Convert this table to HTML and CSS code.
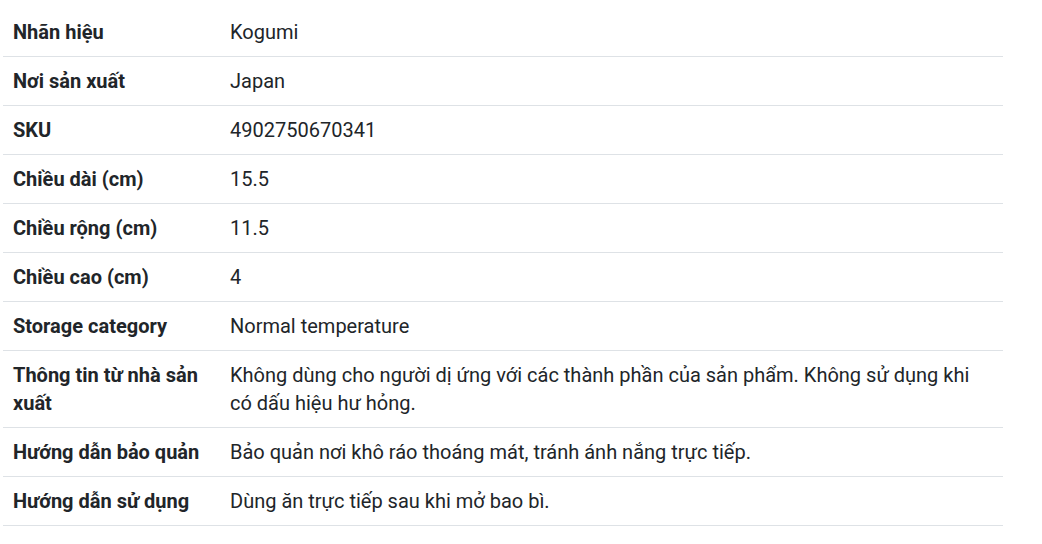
FILE: index.html
```html
<!DOCTYPE html>
<html lang="vi">
<head>
<meta charset="utf-8">
<link rel="stylesheet" href="styles.css">
</head>
<body>
<table class="spec">
  <colgroup><col class="c-label"><col></colgroup>
  <tbody>
    <tr><th>Nhãn hiệu</th><td>Kogumi</td></tr>
    <tr><th>Nơi sản xuất</th><td>Japan</td></tr>
    <tr><th>SKU</th><td>4902750670341</td></tr>
    <tr><th>Chiều dài (cm)</th><td>15.5</td></tr>
    <tr><th>Chiều rộng (cm)</th><td>11.5</td></tr>
    <tr><th>Chiều cao (cm)</th><td>4</td></tr>
    <tr><th>Storage category</th><td>Normal temperature</td></tr>
    <tr><th>Thông tin từ nhà sản xuất</th><td>Không dùng cho người dị ứng với các thành phần của sản phẩm. Không sử dụng khi có dấu hiệu hư hỏng.</td></tr>
    <tr><th>Hướng dẫn bảo quản</th><td>Bảo quản nơi khô ráo thoáng mát, tránh ánh nắng trực tiếp.</td></tr>
    <tr><th>Hướng dẫn sử dụng</th><td>Dùng ăn trực tiếp sau khi mở bao bì.</td></tr>
  </tbody>
</table>
</body>
</html>
```
FILE: styles.css
```css
html, body {
  margin: 0;
  padding: 0;
  background: #fff;
}
body {
  font-family: Roboto, "Noto Sans", sans-serif;
  font-size: 20px;
  line-height: 28px;
  color: #212529;
}
.spec {
  margin: 8px 0 0 3px;
  width: 1000px;
  border-collapse: collapse;
  table-layout: fixed;
}
.c-label {
  width: 217px;
}
.spec th,
.spec td {
  padding: 10px;
  text-align: left;
  vertical-align: top;
  border-bottom: 1px solid #dee2e6;
}
.spec th {
  font-weight: 700;
}
.spec td {
  font-weight: 400;
}
```
